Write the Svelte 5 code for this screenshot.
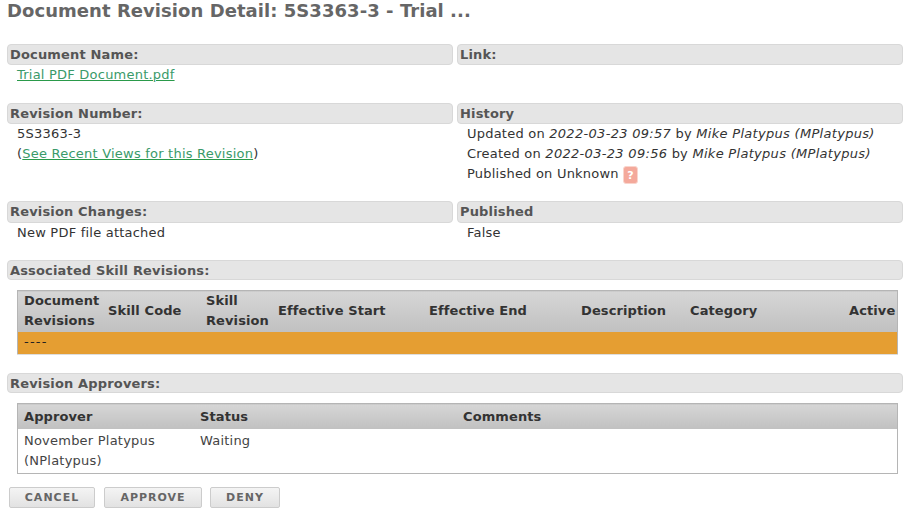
<script>
	const skillCols = [
		{ label: 'Document Revisions', cls: 'c1' },
		{ label: 'Skill Code', cls: 'c2' },
		{ label: 'Skill Revision', cls: 'c3' },
		{ label: 'Effective Start', cls: 'c4' },
		{ label: 'Effective End', cls: 'c5' },
		{ label: 'Description', cls: 'c6' },
		{ label: 'Category', cls: 'c7' },
		{ label: 'Active', cls: 'c8' }
	];
</script>

<div class="page">
	<h1>Document Revision Detail: 5S3363-3 - Trial ...</h1>

	<div class="grid">
		<div class="field">
			<div class="label">Document Name:</div>
			<div class="value"><a href="#doc">Trial PDF Document.pdf</a></div>
		</div>
		<div class="field">
			<div class="label">Link:</div>
			<div class="value"></div>
		</div>

		<div class="field">
			<div class="label">Revision Number:</div>
			<div class="value tight">
				<div>5S3363-3</div>
				<div>(<a href="#views">See Recent Views for this Revision</a>)</div>
			</div>
		</div>
		<div class="field">
			<div class="label">History</div>
			<div class="value tight">
				<div>Updated on <em>2022-03-23 09:57</em> by <em>Mike Platypus (MPlatypus)</em></div>
				<div>Created on <em>2022-03-23 09:56</em> by <em>Mike Platypus (MPlatypus)</em></div>
				<div>Published on Unknown <span class="help">?</span></div>
			</div>
		</div>

		<div class="field">
			<div class="label tall">Revision Changes:</div>
			<div class="value tight">New PDF file attached</div>
		</div>
		<div class="field">
			<div class="label tall">Published</div>
			<div class="value tight">False</div>
		</div>
	</div>

	<div class="label wide">Associated Skill Revisions:</div>
	<table class="skills">
		<thead>
			<tr>
				{#each skillCols as col}
					<th class={col.cls}>{col.label}</th>
				{/each}
			</tr>
		</thead>
		<tbody>
			<tr class="warn">
				<td colspan="8">----</td>
			</tr>
		</tbody>
	</table>

	<div class="label wide second">Revision Approvers:</div>
	<table class="approvers">
		<thead>
			<tr>
				<th class="a1">Approver</th>
				<th class="a2">Status</th>
				<th>Comments</th>
			</tr>
		</thead>
		<tbody>
			<tr>
				<td>November Platypus (NPlatypus)</td>
				<td>Waiting</td>
				<td></td>
			</tr>
		</tbody>
	</table>

	<div class="actions">
		<button class="cancel">Cancel</button>
		<button class="approve">Approve</button>
		<button class="deny">Deny</button>
	</div>
</div>

<style>
	:global(body) {
		margin: 0;
		background: #fff;
	}

	.page {
		font-family: 'DejaVu Sans', sans-serif;
		font-size: 13px;
		line-height: 20px;
		letter-spacing: 0.22px;
		color: #333;
		padding: 0 3px 0 7px;
	}

	h1 {
		margin: 0;
		padding-top: 1px;
		font-size: 18px;
		line-height: 20px;
		letter-spacing: 0.05px;
		font-weight: bold;
		color: #666;
		height: 43px;
	}

	.grid {
		display: grid;
		grid-template-columns: 446px 446px;
		column-gap: 4px;
	}

	.label {
		box-sizing: border-box;
		height: 21px;
		line-height: 19px;
		padding: 0 2px;
		background: #e5e5e5;
		border: 1px solid #d8d8d8;
		border-radius: 4px;
		font-weight: bold;
		letter-spacing: 0.16px;
		color: #555;
	}

	.label.tall {
		height: 22px;
	}

	.value {
		padding: 0 10px;
		margin-bottom: 18px;
		min-height: 20px;
	}

	.value.tight {
		margin-bottom: 17px;
	}

	em {
		letter-spacing: 0.3px;
	}

	a {
		color: #3a9a6a;
		text-decoration: underline;
		text-decoration-color: #2a9a4a;
	}

	.help {
		display: inline-block;
		box-sizing: border-box;
		width: 15px;
		height: 18px;
		line-height: 17px;
		margin: -2px 0;
		text-align: center;
		font-size: 11px;
		font-weight: bold;
		color: #fff;
		background: #f4a99b;
		border: 1px solid #f9d5cd;
		border-radius: 3px;
		vertical-align: -1px;
	}

	.wide {
		width: 896px;
		height: 20px;
		line-height: 20px;
	}

	.wide.second {
		margin-top: 18px;
	}

	table {
		border-collapse: collapse;
		table-layout: fixed;
		box-sizing: border-box;
		width: 881px;
		margin: 10px 0 0 10px;
		border: 1px solid #b5b5b5;
	}

	th {
		background: linear-gradient(#d6d6d6, #c0c0c0);
		color: #333;
		font-weight: bold;
		letter-spacing: 0.1px;
		text-align: left;
		padding: 0 3px 0 6px;
	}

	td {
		padding: 2px 6px;
		vertical-align: top;
		color: #444;
	}

	.skills th {
		vertical-align: middle;
		padding-bottom: 1px;
	}
	.c1 { width: 75px; }
	.c2 { width: 89px; }
	.c3 { width: 63px; }
	.c4 { width: 142px; }
	.c5 { width: 143px; }
	.c6 { width: 100px; }
	.c7 { width: 150px; }
	.skills th.c8 {
		text-align: right;
		padding-right: 2px;
	}

	.warn td {
		background: #e59e32;
		color: #222;
		height: 22px;
		padding: 0 6px;
		letter-spacing: 1.2px;
		border-bottom: 1px solid #ddd;
	}

	.approvers th {
		padding-top: 3px;
		padding-bottom: 2px;
	}
	.a1 { width: 167px; }
	.a2 { width: 254px; }

	.actions {
		display: flex;
		gap: 8px;
		margin: 13px 0 0 2px;
	}

	button {
		box-sizing: border-box;
		height: 21px;
		padding: 0;
		font-family: inherit;
		font-size: 11px;
		font-weight: bold;
		letter-spacing: 1px;
		text-transform: uppercase;
		color: #666;
		background: linear-gradient(#f4f4f4, #e2e2e2);
		border: 1px solid #ccc;
		border-radius: 2px;
	}

	.cancel {
		width: 86px;
		margin-right: 1px;
	}
	.approve { width: 98px; }
	.deny { width: 70px; }
</style>
